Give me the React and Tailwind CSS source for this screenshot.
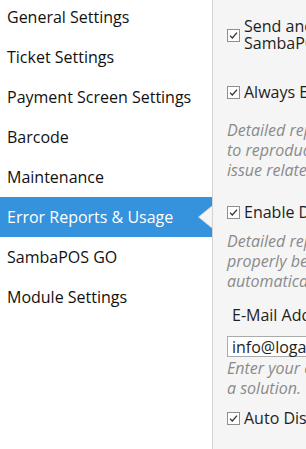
const menuItems = [
  "General Settings",
  "Ticket Settings",
  "Payment Screen Settings",
  "Barcode",
  "Maintenance",
  "Error Reports & Usage",
  "SambaPOS GO",
  "Module Settings"
];

const ACTIVE = "Error Reports & Usage";

function CheckBox() {
  return (
    <span className="flex h-[13px] w-[13px] shrink-0 items-center justify-center border border-[#8e8e8e] bg-white">
      <svg width="11" height="11" viewBox="0 0 11 11">
        <path d="M2 5.6 L4.3 8 L9 2.6" fill="none" stroke="#333" strokeWidth="1.3" />
      </svg>
    </span>
  );
}

function CheckRow({ children, className = "" }) {
  return (
    <div className={`flex items-center gap-[4px] whitespace-nowrap ${className}`}>
      <CheckBox />
      <div className="leading-[17px] text-[#1e1e1e]">{children}</div>
    </div>
  );
}

function Hint({ lines, className = "" }) {
  return (
    <p className={`whitespace-nowrap italic leading-[20px] text-[#8a8a8a] ${className}`}>
      {lines.map((line) => (
        <span key={line} className="block">
          {line}
        </span>
      ))}
    </p>
  );
}

export default function App() {
  return (
    <div
      className="flex h-[449px] w-[306px] overflow-hidden bg-white text-[16px]"
      style={{ fontFamily: "'Open Sans', 'Noto Sans', sans-serif" }}
    >
      <nav className="-mt-[3px] w-[212px] shrink-0">
        {menuItems.map((item) => {
          const isActive = item === ACTIVE;
          return (
            <div
              key={item}
              className={`relative flex h-[40px] items-center whitespace-nowrap pl-[7px] ${
                isActive ? "bg-[#3592dc] text-white" : "text-[#111]"
              }`}
            >
              {item}
              {isActive ? (
                <svg
                  className="absolute right-0 top-[9px]"
                  width="14"
                  height="22"
                  viewBox="0 0 14 22"
                >
                  <path d="M14 0 L0.5 11 L14 22 Z" fill="#f5f5f5" />
                  <path d="M14 0 L0.5 11 L14 22" fill="none" stroke="#d6d6d6" strokeWidth="0.8" />
                </svg>
              ) : null}
            </div>
          );
        })}
      </nav>

      <section className="flex-1 overflow-hidden border-l border-[#d4d4d4] bg-[#f5f5f5] pl-[14px] pt-[18px]">
        <div className="w-[360px]">
          <CheckRow>
            <span className="block">Send anonymous usage data to</span>
            <span className="block">SambaPOS servers</span>
          </CheckRow>

          <CheckRow className="mt-[32px]">Always Email Error Reports</CheckRow>

          <Hint
            className="mt-[19px]"
            lines={["Detailed reports helps us", "to reproduce and fix the", "issue relate."]}
          />

          <CheckRow className="mt-[24px]">Enable Detailed Reports</CheckRow>

          <Hint
            className="mt-[10px]"
            lines={["Detailed reports could", "properly be sent", "automatically"]}
          />

          <div className="mt-[16px] whitespace-nowrap pl-[5px] leading-[17px] text-[#1e1e1e]">
            E-Mail Address
          </div>

          <div className="mt-[12px] flex h-[21px] items-center whitespace-nowrap border border-[#ababab] bg-white pl-[4px] text-[#1e1e1e]">
            info@logaxis.com
          </div>

          <Hint
            className="mt-[1px]"
            lines={["Enter your email address to get", "a solution."]}
          />

          <CheckRow className="mt-[12px]">Auto Dismiss Error Messages</CheckRow>
        </div>
      </section>
    </div>
  );
}
